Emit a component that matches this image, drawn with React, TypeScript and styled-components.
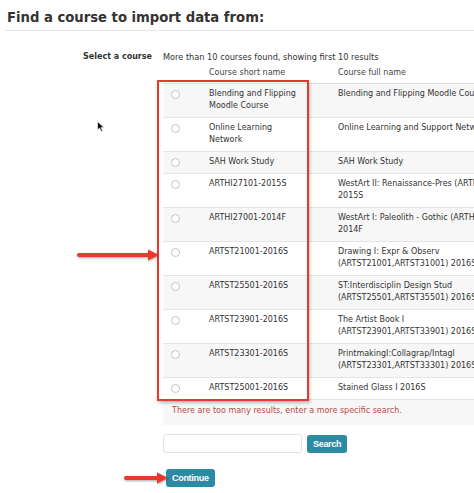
import React from 'react';
import styled, { createGlobalStyle } from 'styled-components';

const GlobalStyle = createGlobalStyle`
  html, body {
    margin: 0;
    padding: 0;
    background: #ffffff;
    overflow: hidden;
  }
  body {
    font-family: "DejaVu Sans", Verdana, sans-serif;
    color: #333333;
  }
`;

const Page = styled.div`
  position: relative;
  width: 474px;
  height: 493px;
  padding-left: 5px;
  box-sizing: border-box;
  overflow: hidden;
`;

const Title = styled.h2`
  margin: 0;
  padding: 10px 0 4px 2px;
  font-size: 13.2px;
  line-height: 16px;
  font-weight: bold;
  color: #333333;
  border-bottom: 1px solid #e6e6e6;
  white-space: nowrap;
`;

const FormRow = styled.div`
  display: grid;
  grid-template-columns: 147px 1fr;
  column-gap: 11px;
  margin-top: 20px;
`;

const Label = styled.div`
  text-align: right;
  font-size: 8px;
  font-weight: bold;
  line-height: 12px;
`;

const Content = styled.div`
  min-width: 0;
`;

const Info = styled.div`
  font-size: 8.2px;
  line-height: 12px;
  white-space: nowrap;
`;

const Table = styled.table`
  border-collapse: collapse;
  margin-top: 4px;
  width: 420px;
  font-size: 8px;
  line-height: 12px;
`;

const Th = styled.th<{ $w?: number }>`
  text-align: left;
  font-weight: normal;
  color: #444444;
  padding: 0 6px 4px;
  width: ${(p) => (p.$w ? `${p.$w}px` : 'auto')};
  border-bottom: 1px solid #dddddd;
  white-space: nowrap;
`;

const Tr = styled.tr<{ $striped: boolean }>`
  background: ${(p) => (p.$striped ? '#f7f7f7' : '#ffffff')};
`;

const Td = styled.td`
  vertical-align: top;
  padding: 4px 6px 5px;
  border-bottom: 1px solid #e4e4e4;
  white-space: nowrap;
`;

const Radio = styled.span`
  display: block;
  width: 7px;
  height: 7px;
  margin: 2px 0 0 2px;
  border: 1px solid #c4c4c4;
  border-radius: 50%;
  background: #ffffff;
`;

const Line = styled.div``;

const ErrorRow = styled.div`
  background: #f7f7f7;
  color: #b94a48;
  font-size: 8px;
  line-height: 12px;
  padding: 5px 9px 8px;
  white-space: nowrap;
`;

const SearchRow = styled.div`
  display: flex;
  align-items: center;
  gap: 5px;
  margin-top: 9px;
`;

const SearchInput = styled.input`
  width: 139px;
  height: 19px;
  box-sizing: border-box;
  border: 1px solid #e3e3e3;
  border-radius: 3px;
  background: #ffffff;
  padding: 0 4px;
  outline: none;
`;

const Button = styled.button`
  height: 18px;
  padding: 0 6px;
  border: none;
  border-radius: 3px;
  background: #2b8ba5;
  color: #ffffff;
  font-family: "Liberation Sans", Arial, sans-serif;
  font-weight: bold;
  font-size: 9px;
  letter-spacing: -0.3px;
  cursor: pointer;
`;

const ContinueRow = styled.div`
  margin: 13px 0 0 161px;
`;

const Highlight = styled.div`
  position: absolute;
  left: 157px;
  top: 80px;
  width: 152px;
  height: 321px;
  box-sizing: border-box;
  border: 2.5px solid #e63a2b;
  box-shadow: 1px 2px 3px rgba(0, 0, 0, 0.25);
  pointer-events: none;
`;

const Overlay = styled.svg`
  position: absolute;
  pointer-events: none;
  overflow: visible;
`;

type Course = { short: string[]; full: string[] };

const courses: Course[] = [
  { short: ['Blending and Flipping', 'Moodle Course'], full: ['Blending and Flipping Moodle Course'] },
  { short: ['Online Learning', 'Network'], full: ['Online Learning and Support Network'] },
  { short: ['SAH Work Study'], full: ['SAH Work Study'] },
  { short: ['ARTHI27101-2015S'], full: ['WestArt II: Renaissance-Pres (ARTHI27101,ARTHI37101)', '2015S'] },
  { short: ['ARTHI27001-2014F'], full: ['WestArt I: Paleolith - Gothic (ARTHI27001,ARTHI37001)', '2014F'] },
  { short: ['ARTST21001-2016S'], full: ['Drawing I: Expr & Observ', '(ARTST21001,ARTST31001) 2016S'] },
  { short: ['ARTST25501-2016S'], full: ['ST:Interdisciplin Design Stud', '(ARTST25501,ARTST35501) 2016S'] },
  { short: ['ARTST23901-2016S'], full: ['The Artist Book I', '(ARTST23901,ARTST33901) 2016S'] },
  { short: ['ARTST23301-2016S'], full: ['PrintmakingI:Collagrap/Intagl', '(ARTST23301,ARTST33301) 2016S'] },
  { short: ['ARTST25001-2016S'], full: ['Stained Glass I 2016S'] },
];

function Arrow({ x, y, length }: { x: number; y: number; length: number }) {
  return (
    <Overlay style={{ left: x, top: y - 8 }} width={length} height={16}>
      <defs>
        <filter id={`sh${x}`} x="-10%" y="-50%" width="120%" height="200%">
          <feDropShadow dx="0.5" dy="1" stdDeviation="0.8" floodOpacity="0.35" />
        </filter>
      </defs>
      <g filter={`url(#sh${x})`}>
        <line x1={2} y1={8} x2={length - 9} y2={8} stroke="#e63a2b" strokeWidth={4} strokeLinecap="round" />
        <path d={`M${length - 11} 2.5 L${length} 8 L${length - 11} 13.5 Z`} fill="#e63a2b" />
      </g>
    </Overlay>
  );
}

function Cursor() {
  return (
    <Overlay style={{ left: 97, top: 121 }} width={8} height={12}>
      <path d="M0.5 0.5 L0.5 9 L2.6 7 L4.2 10.5 L5.6 9.9 L4.1 6.6 L7 6.6 Z" fill="#111" stroke="#fff" strokeWidth={0.6} />
    </Overlay>
  );
}

export default function App() {
  return (
    <Page>
      <GlobalStyle />
      <Title>Find a course to import data from:</Title>
      <FormRow>
        <Label>Select a course</Label>
        <Content>
          <Info>More than 10 courses found, showing first 10 results</Info>
          <Table>
            <thead>
              <tr>
                <Th $w={28} />
                <Th $w={117}>Course short name</Th>
                <Th>Course full name</Th>
              </tr>
            </thead>
            <tbody>
              {courses.map((c, i) => (
                <Tr key={i} $striped={i % 2 === 0}>
                  <Td>
                    <Radio />
                  </Td>
                  <Td>
                    {c.short.map((l) => (
                      <Line key={l}>{l}</Line>
                    ))}
                  </Td>
                  <Td>
                    {c.full.map((l) => (
                      <Line key={l}>{l}</Line>
                    ))}
                  </Td>
                </Tr>
              ))}
            </tbody>
          </Table>
          <ErrorRow>There are too many results, enter a more specific search.</ErrorRow>
          <SearchRow>
            <SearchInput type="text" />
            <Button>Search</Button>
          </SearchRow>
        </Content>
      </FormRow>
      <ContinueRow>
        <Button>Continue</Button>
      </ContinueRow>
      <Highlight />
      <Arrow x={77} y={255} length={82} />
      <Arrow x={124} y={478} length={44} />
      <Cursor />
    </Page>
  );
}
